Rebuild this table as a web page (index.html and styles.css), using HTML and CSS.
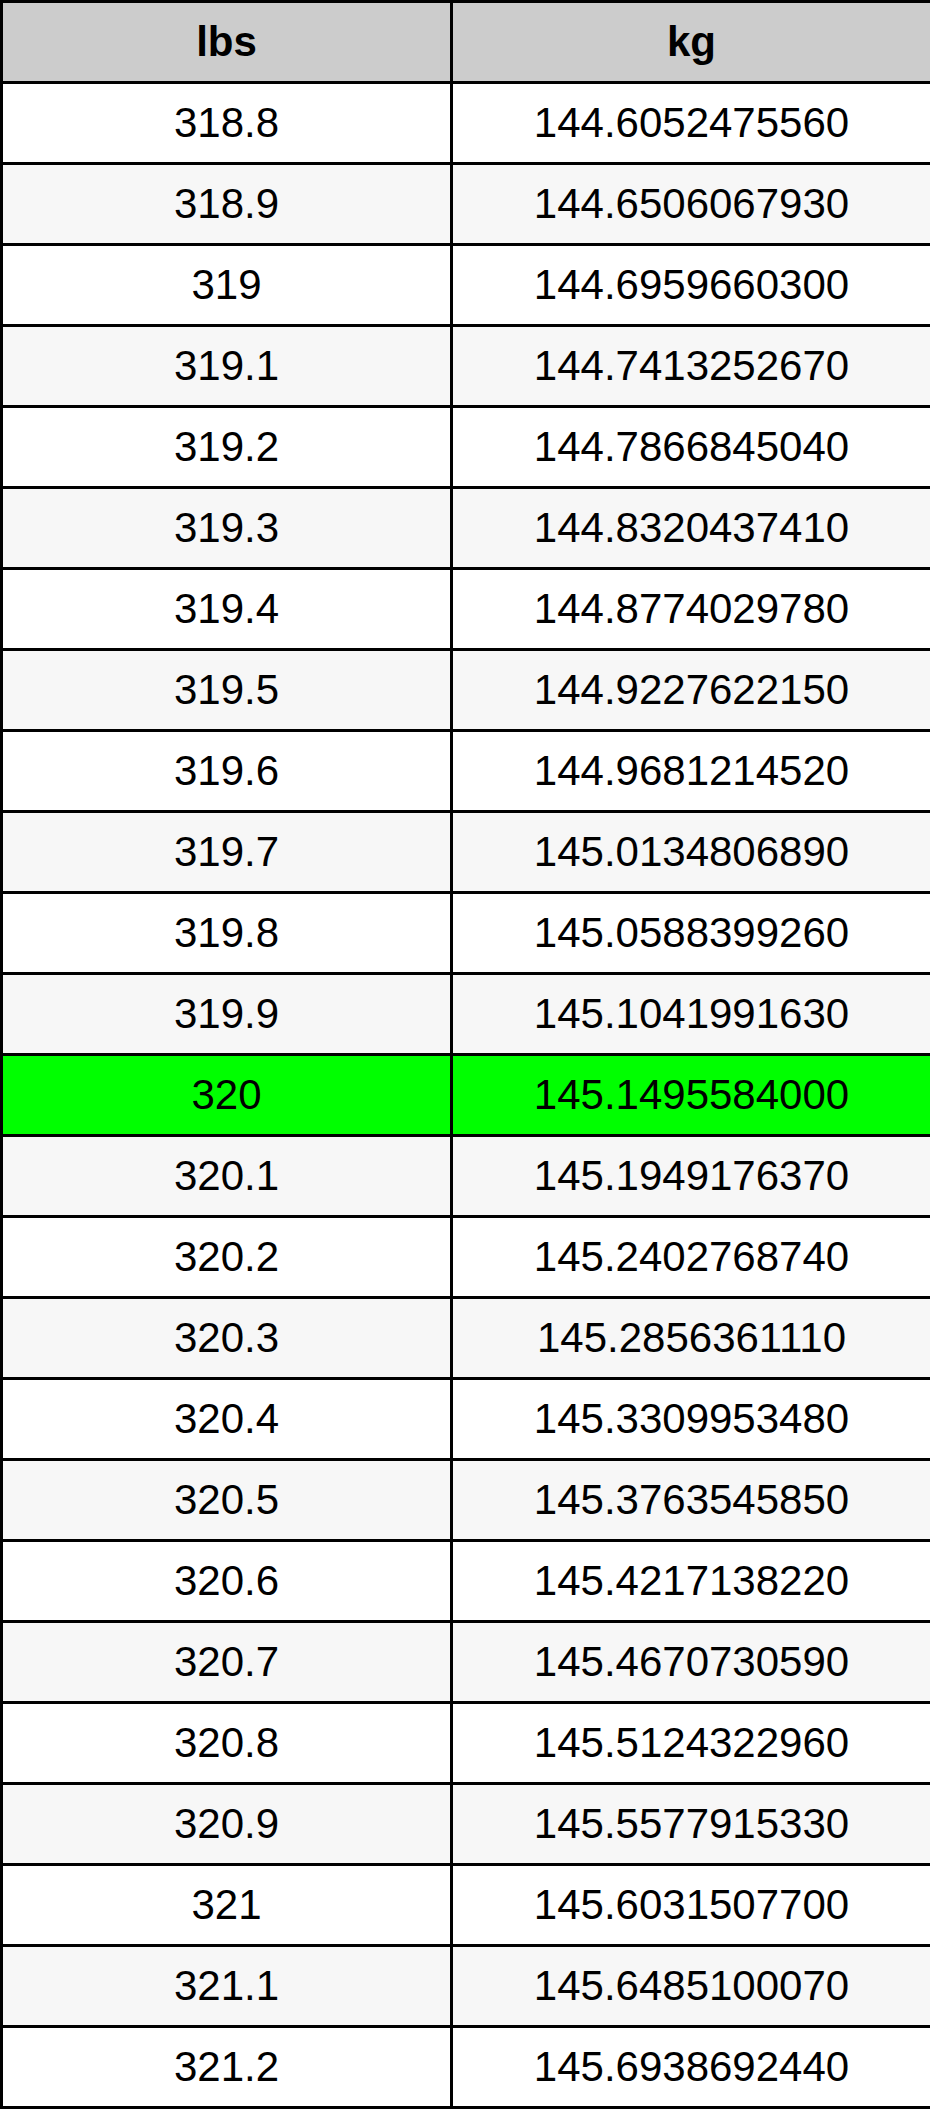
FILE: index.html
```html
<!DOCTYPE html>
<html>
<head>
<meta charset="utf-8">
<link rel="stylesheet" href="styles.css">
</head>
<body>
<table class="conv">
<colgroup><col class="c1"><col class="c2"></colgroup>
<thead>
<tr><th>lbs</th><th>kg</th></tr>
</thead>
<tbody>
<tr><td>318.8</td><td>144.6052475560</td></tr>
<tr><td>318.9</td><td>144.6506067930</td></tr>
<tr><td>319</td><td>144.6959660300</td></tr>
<tr><td>319.1</td><td>144.7413252670</td></tr>
<tr><td>319.2</td><td>144.7866845040</td></tr>
<tr><td>319.3</td><td>144.8320437410</td></tr>
<tr><td>319.4</td><td>144.8774029780</td></tr>
<tr><td>319.5</td><td>144.9227622150</td></tr>
<tr><td>319.6</td><td>144.9681214520</td></tr>
<tr><td>319.7</td><td>145.0134806890</td></tr>
<tr><td>319.8</td><td>145.0588399260</td></tr>
<tr><td>319.9</td><td>145.1041991630</td></tr>
<tr class="hl"><td>320</td><td>145.1495584000</td></tr>
<tr><td>320.1</td><td>145.1949176370</td></tr>
<tr><td>320.2</td><td>145.2402768740</td></tr>
<tr><td>320.3</td><td>145.2856361110</td></tr>
<tr><td>320.4</td><td>145.3309953480</td></tr>
<tr><td>320.5</td><td>145.3763545850</td></tr>
<tr><td>320.6</td><td>145.4217138220</td></tr>
<tr><td>320.7</td><td>145.4670730590</td></tr>
<tr><td>320.8</td><td>145.5124322960</td></tr>
<tr><td>320.9</td><td>145.5577915330</td></tr>
<tr><td>321</td><td>145.6031507700</td></tr>
<tr><td>321.1</td><td>145.6485100070</td></tr>
<tr><td>321.2</td><td>145.6938692440</td></tr>
</tbody>
</table>
</body>
</html>
```

FILE: styles.css
```css
html, body {
  margin: 0;
  padding: 0;
  background: #ffffff;
}
.conv {
  width: 930px;
  border-collapse: collapse;
  table-layout: fixed;
  font-family: "Liberation Sans", Arial, sans-serif;
  font-size: 42px;
  color: #000;
}
.conv .c1 { width: 450px; }
.conv .c2 { width: 480px; }
.conv th,
.conv td {
  border: 3px solid #000;
  height: 78px;
  padding: 0;
  text-align: center;
  vertical-align: middle;
  box-sizing: content-box;
}
.conv th {
  background: #cccccc;
  font-weight: bold;
}
.conv tbody tr:nth-child(even) td {
  background: #f7f7f7;
}
.conv tbody tr.hl td {
  background: #00ff00;
}
```
